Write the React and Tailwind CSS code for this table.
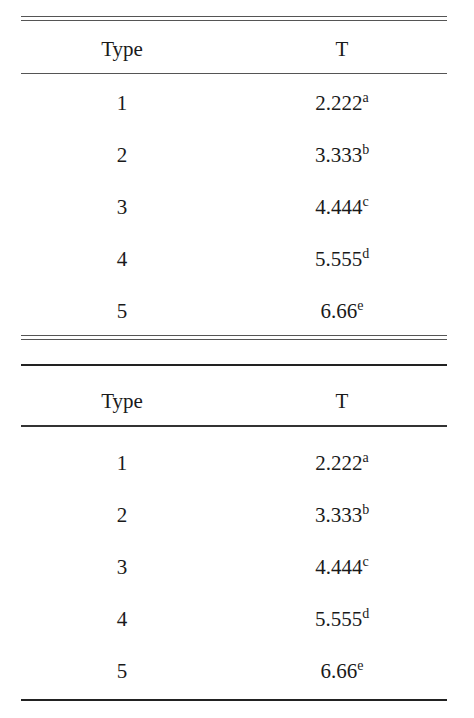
import React from "react";

const rows = [
  ["1", "2.222", "a"],
  ["2", "3.333", "b"],
  ["3", "4.444", "c"],
  ["4", "5.555", "d"],
  ["5", "6.66", "e"],
];

const cell = "text-center font-['Liberation_Serif'] font-normal text-[21px] text-[#1a1a1a]";

function Row({ a, b, s }) {
  return (
    <div className="grid grid-cols-[202px_1fr] leading-[48px]">
      <div className={cell}>{a}</div>
      <div className={cell + " pl-[14px]"}>
        <span className="font-['Liberation_Serif']">{b}</span>
        <sup className="font-['Liberation_Serif'] text-[14px] top-[-8px]">{s}</sup>
      </div>
    </div>
  );
}

function Header({ className = "" }) {
  return (
    <div className={"grid grid-cols-[202px_1fr] " + className}>
      <div className={cell}>Type</div>
      <div className={cell + " pl-[14px]"}>T</div>
    </div>
  );
}

export default function App() {
  return (
    <div className="w-[474px] h-[718px] bg-white pt-[16px] pl-[21px] pr-[27px] font-['Liberation_Serif']">
      {/* Table 1 */}
      <div className="h-px bg-[#555]" />
      <div className="h-[3px]" />
      <div className="h-px bg-[#555]" />
      <Header className="pt-[5px] leading-[47px]" />
      <div className="h-px bg-[#555]" />
      <div className="flex flex-col gap-[4px] pt-[5px]">
        {rows.map((r) => (
          <Row key={r[0]} a={r[0]} b={r[1]} s={r[2]} />
        ))}
      </div>
      <div className="h-px bg-[#555]" />
      <div className="h-[3px]" />
      <div className="h-px bg-[#555]" />

      {/* Table 2 */}
      <div className="h-[24px]" />
      <div className="h-[2px] bg-[#222]" />
      <Header className="pt-[11px] leading-[48px]" />
      <div className="h-[1.5px] bg-[#333]" />
      <div className="flex flex-col gap-[4px] pt-[12px] pb-[4px]">
        {rows.map((r) => (
          <Row key={r[0]} a={r[0]} b={r[1]} s={r[2]} />
        ))}
      </div>
      <div className="h-[2px] bg-[#222]" />
    </div>
  );
}
